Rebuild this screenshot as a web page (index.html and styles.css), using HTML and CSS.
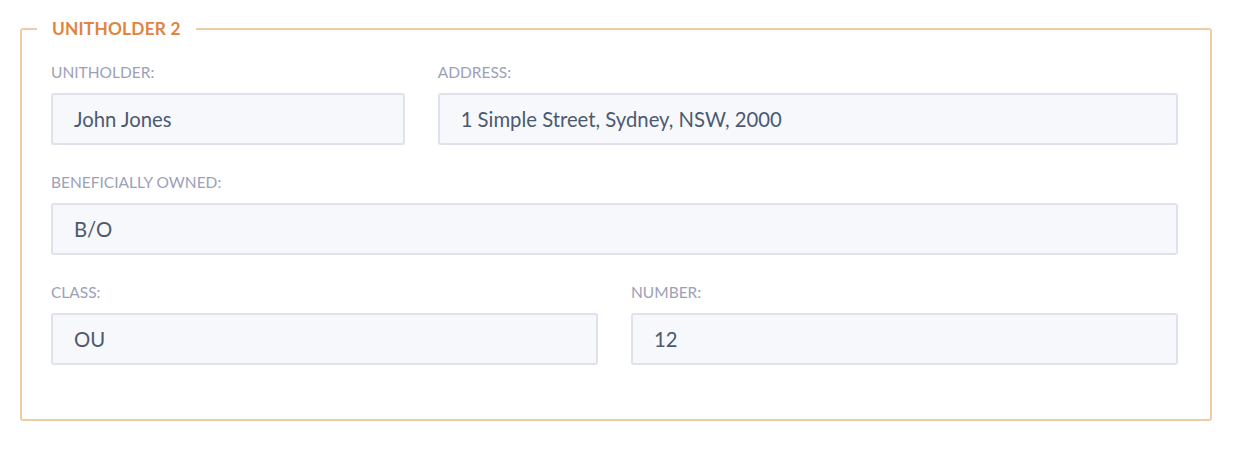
FILE: index.html
```html
<!DOCTYPE html>
<html lang="en">
<head>
    <meta charset="UTF-8">
    <meta name="viewport" content="width=device-width, initial-scale=1.0">
    <title>Unitholder 2</title>
    <link rel="stylesheet" href="styles.css">
</head>
<body>
    <fieldset class="holder">
        <legend>Unitholder 2</legend>

        <div class="row">
            <div class="field col-4">
                <label for="unitholder">Unitholder:</label>
                <input type="text" id="unitholder" value="John Jones" readonly>
            </div>
            <div class="field col-8">
                <label for="address">Address:</label>
                <input type="text" id="address" value="1 Simple Street, Sydney, NSW, 2000" readonly>
            </div>
        </div>

        <div class="row">
            <div class="field col-12">
                <label for="owned">Beneficially Owned:</label>
                <input type="text" id="owned" value="B/O" readonly>
            </div>
        </div>

        <div class="row">
            <div class="field col-6">
                <label for="class">Class:</label>
                <input type="text" id="class" value="OU" readonly>
            </div>
            <div class="field col-6">
                <label for="number">Number:</label>
                <input type="text" id="number" value="12" readonly>
            </div>
        </div>
    </fieldset>
</body>
</html>
```

FILE: styles.css
```css
body {
    margin: 0;
    padding: 18px 26px 0 20px;
    font-family: Lato, "Open Sans", sans-serif;
    background-color: #fff;
}
.holder {
    margin: 0;
    padding: 23px 32px 54px 29px;
    border: 2px solid #f1cba6;
    border-radius: 3px;
}
.holder legend {
    margin-left: -14px;
    padding: 0 15px;
    font-size: 17.3px;
    line-height: 22px;
    font-weight: bold;
    text-transform: uppercase;
    letter-spacing: 0.2px;
    color: #e0843f;
}
.row {
    display: grid;
    grid-template-columns: repeat(12, 1fr);
    column-gap: 33px;
    margin-bottom: 28px;
}
.row:last-child {
    margin-bottom: 0;
}
.col-4 { grid-column: span 4; }
.col-6 { grid-column: span 6; }
.col-8 { grid-column: span 8; }
.col-12 { grid-column: span 12; }
.field label {
    display: block;
    font-size: 15.5px;
    line-height: 18px;
    text-transform: uppercase;
    color: #9ca1b7;
    margin-bottom: 12px;
}
.field input {
    display: block;
    box-sizing: border-box;
    width: 100%;
    height: 52px;
    padding: 0 21px;
    border: 2px solid #dfe2eb;
    border-radius: 3px;
    background-color: #f7f8fc;
    font-family: inherit;
    font-size: 20.3px;
    color: #4b5a70;
    outline: none;
}
```
